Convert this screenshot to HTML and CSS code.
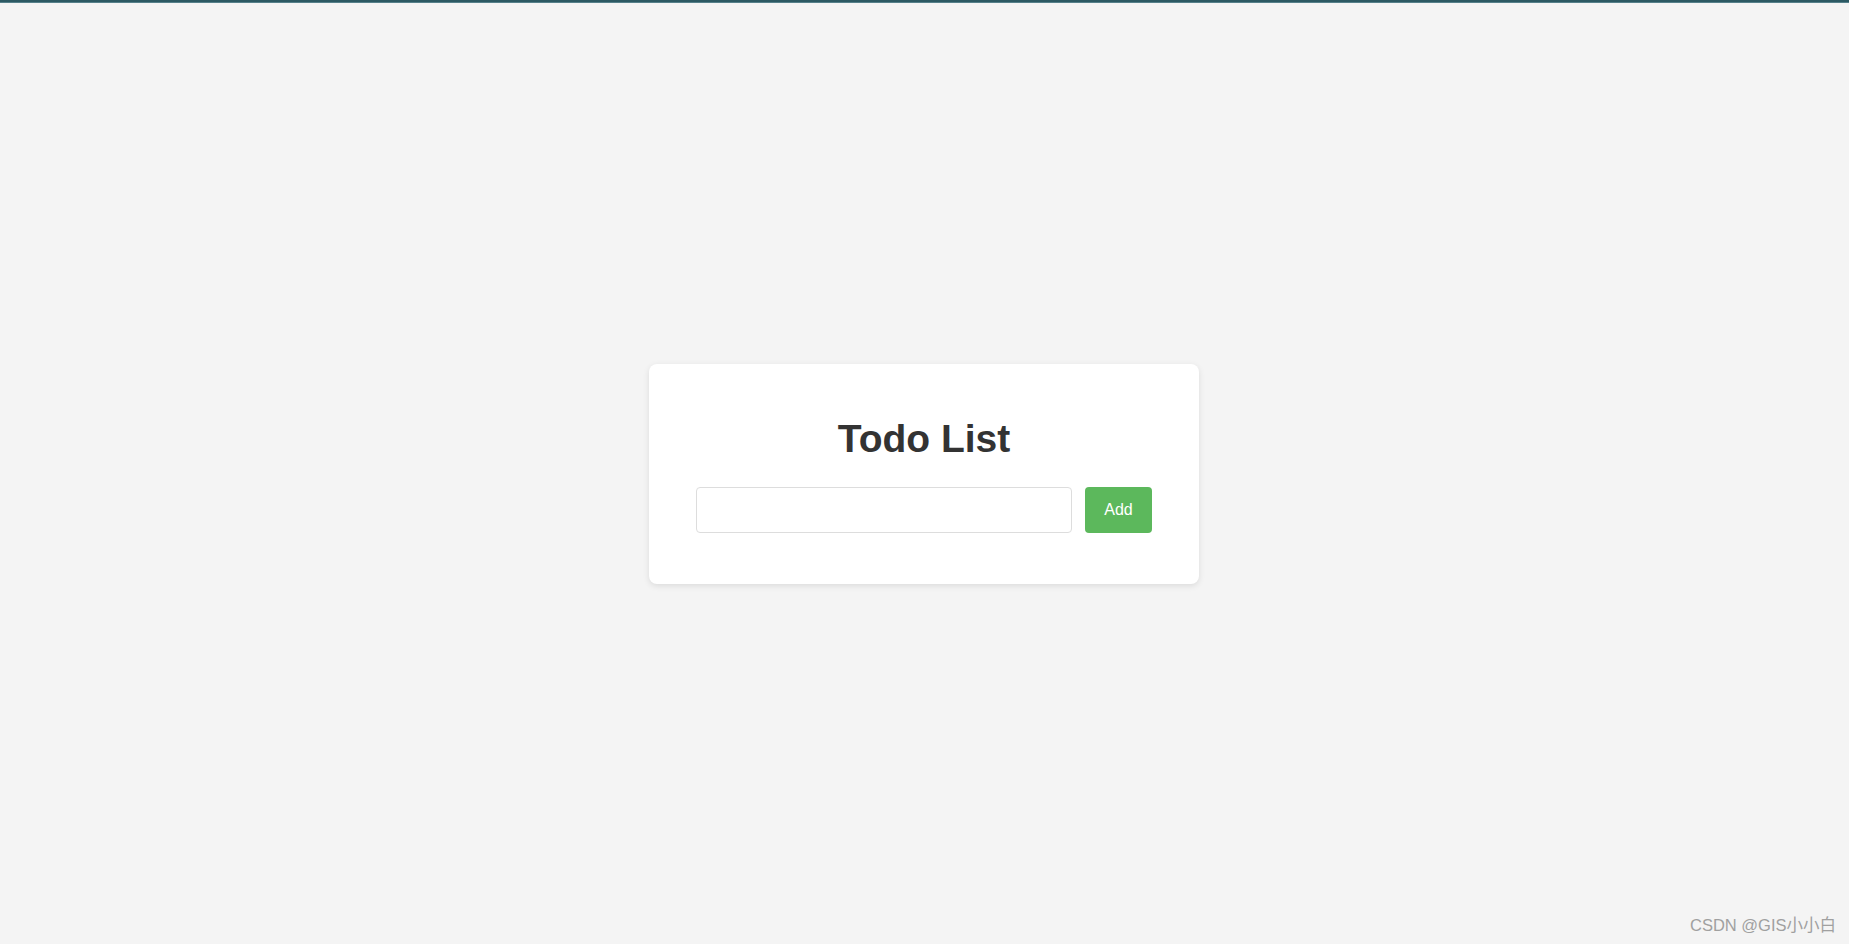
FILE: index.html
```html
<!DOCTYPE html>
<html lang="en">
<head>
<meta charset="utf-8">
<title>Todo List</title>
<link rel="stylesheet" href="styles.css">
</head>
<body>
<div class="topbar"></div>
<main class="stage">
  <section class="card">
    <h1 class="title">Todo List</h1>
    <form class="add-form" onsubmit="return false;">
      <input class="todo-input" type="text" aria-label="New todo">
      <button class="add-btn" type="submit">Add</button>
    </form>
  </section>
</main>
<div class="watermark">CSDN @GIS小小白</div>
</body>
</html>
```

FILE: styles.css
```css
html, body {
  margin: 0;
  padding: 0;
}
body {
  background: #f4f4f4;
  font-family: "Liberation Sans", Arial, sans-serif;
  color: #333;
  height: 100vh;
  display: flex;
  flex-direction: column;
  overflow: hidden;
}
.topbar {
  height: 2px;
  background: #2c5963;
  border-bottom: 1px solid #55808a;
  flex: none;
}
.stage {
  flex: 1;
  display: flex;
  align-items: center;
  justify-content: center;
}
.card {
  width: 550px;
  box-sizing: border-box;
  background: #fff;
  border-radius: 8px;
  box-shadow: 0 2px 6px rgba(0, 0, 0, 0.1);
  padding: 52px 47px 51px;
  margin-left: -1px;
}
.title {
  margin: 0 0 25px;
  font-size: 39px;
  line-height: 46px;
  font-weight: bold;
  text-align: center;
  color: #333;
}
.add-form {
  display: flex;
  gap: 13px;
  margin: 0;
}
.todo-input {
  width: 376px;
  height: 46px;
  box-sizing: border-box;
  border: 1px solid #ddd;
  border-radius: 4px;
  padding: 10px;
  font-size: 16px;
  font-family: "Liberation Sans", Arial, sans-serif;
  outline: none;
}
.add-btn {
  width: 67px;
  height: 46px;
  border: none;
  border-radius: 4px;
  background: #5cb85c;
  color: #fff;
  font-size: 16px;
  font-family: "Liberation Sans", Arial, sans-serif;
  padding: 0;
  cursor: pointer;
}
.watermark {
  position: absolute;
  right: 13px;
  bottom: 8px;
  font-size: 16.5px;
  color: #a0a0a0;
  font-family: "Liberation Sans", Arial, "Noto Sans CJK SC", sans-serif;
}
```
